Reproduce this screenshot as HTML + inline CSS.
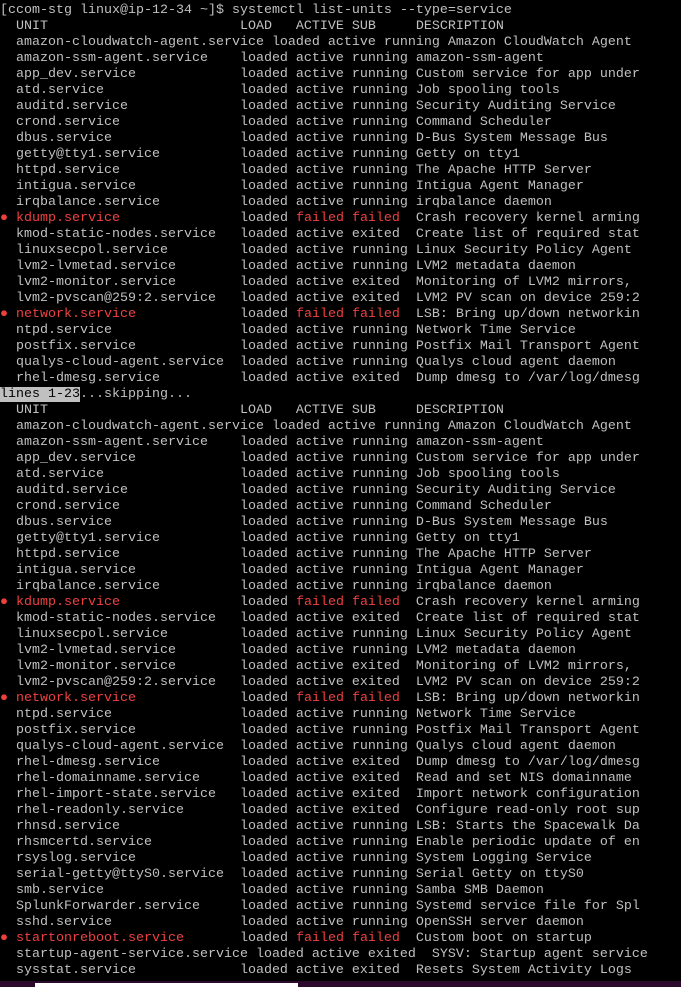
<!DOCTYPE html>
<html><head><meta charset="utf-8"><style>
html,body{margin:0;padding:0;background:#000;width:681px;height:987px;overflow:hidden}
pre{margin:0;padding:3px 0 0 0;font-family:"Liberation Mono","DejaVu Sans Mono",monospace;font-size:13.33px;line-height:16px;color:#c0c0c0;white-space:pre}
.r{color:#ef4040}
.h{background:#c0c0c0;color:#000}
.bar{position:absolute;left:0;top:981px;width:681px;height:6px;background:#2c0a2c}
.box{position:absolute;left:35px;top:983px;width:263px;height:4px;background:#fff}
</style></head><body>
<pre>[ccom-stg linux@ip-12-34 ~]$ systemctl list-units --type=service
  UNIT                        LOAD   ACTIVE SUB     DESCRIPTION
  amazon-cloudwatch-agent.service loaded active running Amazon CloudWatch Agent
  amazon-ssm-agent.service    loaded active running amazon-ssm-agent
  app_dev.service             loaded active running Custom service for app under
  atd.service                 loaded active running Job spooling tools
  auditd.service              loaded active running Security Auditing Service
  crond.service               loaded active running Command Scheduler
  dbus.service                loaded active running D-Bus System Message Bus
  getty@tty1.service          loaded active running Getty on tty1
  httpd.service               loaded active running The Apache HTTP Server
  intigua.service             loaded active running Intigua Agent Manager
  irqbalance.service          loaded active running irqbalance daemon
<span class="r">● kdump.service</span>               loaded <span class="r">failed failed</span>  Crash recovery kernel arming
  kmod-static-nodes.service   loaded active exited  Create list of required stat
  linuxsecpol.service         loaded active running Linux Security Policy Agent
  lvm2-lvmetad.service        loaded active running LVM2 metadata daemon
  lvm2-monitor.service        loaded active exited  Monitoring of LVM2 mirrors,
  lvm2-pvscan@259:2.service   loaded active exited  LVM2 PV scan on device 259:2
<span class="r">● network.service</span>             loaded <span class="r">failed failed</span>  LSB: Bring up/down networkin
  ntpd.service                loaded active running Network Time Service
  postfix.service             loaded active running Postfix Mail Transport Agent
  qualys-cloud-agent.service  loaded active running Qualys cloud agent daemon
  rhel-dmesg.service          loaded active exited  Dump dmesg to /var/log/dmesg
<span class="h">lines 1-23</span>...skipping...
  UNIT                        LOAD   ACTIVE SUB     DESCRIPTION
  amazon-cloudwatch-agent.service loaded active running Amazon CloudWatch Agent
  amazon-ssm-agent.service    loaded active running amazon-ssm-agent
  app_dev.service             loaded active running Custom service for app under
  atd.service                 loaded active running Job spooling tools
  auditd.service              loaded active running Security Auditing Service
  crond.service               loaded active running Command Scheduler
  dbus.service                loaded active running D-Bus System Message Bus
  getty@tty1.service          loaded active running Getty on tty1
  httpd.service               loaded active running The Apache HTTP Server
  intigua.service             loaded active running Intigua Agent Manager
  irqbalance.service          loaded active running irqbalance daemon
<span class="r">● kdump.service</span>               loaded <span class="r">failed failed</span>  Crash recovery kernel arming
  kmod-static-nodes.service   loaded active exited  Create list of required stat
  linuxsecpol.service         loaded active running Linux Security Policy Agent
  lvm2-lvmetad.service        loaded active running LVM2 metadata daemon
  lvm2-monitor.service        loaded active exited  Monitoring of LVM2 mirrors,
  lvm2-pvscan@259:2.service   loaded active exited  LVM2 PV scan on device 259:2
<span class="r">● network.service</span>             loaded <span class="r">failed failed</span>  LSB: Bring up/down networkin
  ntpd.service                loaded active running Network Time Service
  postfix.service             loaded active running Postfix Mail Transport Agent
  qualys-cloud-agent.service  loaded active running Qualys cloud agent daemon
  rhel-dmesg.service          loaded active exited  Dump dmesg to /var/log/dmesg
  rhel-domainname.service     loaded active exited  Read and set NIS domainname
  rhel-import-state.service   loaded active exited  Import network configuration
  rhel-readonly.service       loaded active exited  Configure read-only root sup
  rhnsd.service               loaded active running LSB: Starts the Spacewalk Da
  rhsmcertd.service           loaded active running Enable periodic update of en
  rsyslog.service             loaded active running System Logging Service
  serial-getty@ttyS0.service  loaded active running Serial Getty on ttyS0
  smb.service                 loaded active running Samba SMB Daemon
  SplunkForwarder.service     loaded active running Systemd service file for Spl
  sshd.service                loaded active running OpenSSH server daemon
<span class="r">● startonreboot.service</span>       loaded <span class="r">failed failed</span>  Custom boot on startup
  startup-agent-service.service loaded active exited  SYSV: Startup agent service
  sysstat.service             loaded active exited  Resets System Activity Logs
</pre>
<div class="bar"></div><div class="box"></div>
</body></html>
